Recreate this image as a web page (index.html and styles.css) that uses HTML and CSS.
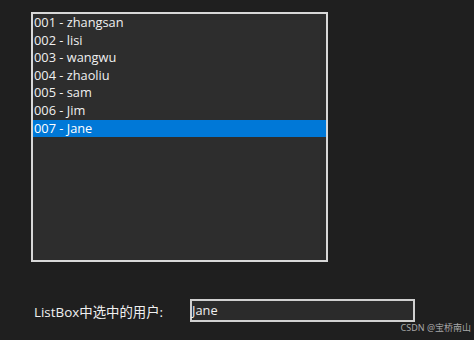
FILE: index.html
```html
<!DOCTYPE html>
<html>
<head>
<meta charset="utf-8">
<link rel="stylesheet" href="styles.css">
</head>
<body>
<div class="window">
  <div class="listbox">
    <div class="item">001 - zhangsan</div>
    <div class="item">002 - lisi</div>
    <div class="item">003 - wangwu</div>
    <div class="item">004 - zhaoliu</div>
    <div class="item">005 - sam</div>
    <div class="item">006 - Jim</div>
    <div class="item selected">007 - Jane</div>
  </div>
  <div class="row">
    <span class="label">ListBox中选中的用户:</span>
    <div class="textbox">Jane</div>
  </div>
  <div class="watermark">CSDN @宝桥南山</div>
</div>
</body>
</html>
```
FILE: styles.css
```css
html, body {
  margin: 0;
  padding: 0;
  background: #1f1f1f;
}
.window {
  position: relative;
  width: 474px;
  height: 340px;
  box-sizing: border-box;
  padding: 12px 0 0 31px;
  font-family: "Open Sans", "Noto Sans CJK SC", sans-serif;
  font-size: 12.8px;
  color: #f0f0f0;
}
.listbox {
  width: 297px;
  height: 250px;
  box-sizing: border-box;
  border: 2px solid #d8d8d8;
  background: #2d2d2d;
  display: flex;
  flex-direction: column;
}
.item {
  height: 17.6px;
  line-height: 17.6px;
  padding-left: 1px;
  white-space: nowrap;
}
.selected {
  background: #0078d7;
  color: #ffffff;
}
.row {
  display: flex;
  align-items: center;
  margin-top: 37px;
}
.label {
  width: 159px;
  padding-left: 3px;
  box-sizing: border-box;
  font-size: 13.4px;
  white-space: nowrap;
}
.textbox {
  width: 225px;
  height: 23px;
  box-sizing: border-box;
  border: 2px solid #d0d0d0;
  background: #2b2b2b;
  line-height: 19px;
  padding-left: 0px;
}
.watermark {
  position: absolute;
  right: 3px;
  bottom: 6px;
  font-family: "Noto Sans", "Noto Sans CJK SC", sans-serif;
  font-size: 9px;
  color: #a8a8a8;
}
```
